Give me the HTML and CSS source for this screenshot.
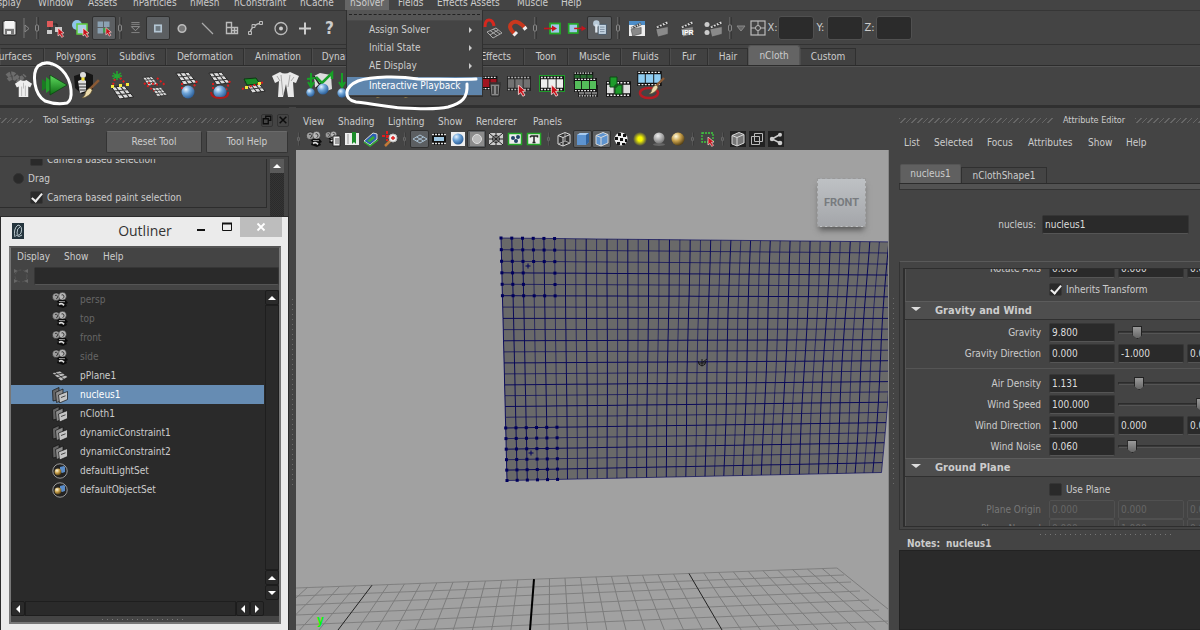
FILE: index.html
```html
<!DOCTYPE html>
<html lang="en">
<head>
<meta charset="utf-8">
<title>nCloth scene</title>
<link rel="stylesheet" href="styles.css">
</head>
<body>
<svg class="defs" aria-hidden="true">
  <defs>
    <linearGradient id="gGreen" x1="0" y1="0" x2="0" y2="1"><stop offset="0" stop-color="#5fdc5f"/><stop offset="1" stop-color="#0c6b12"/></linearGradient>
    <radialGradient id="gBlue" cx=".35" cy=".3" r=".8"><stop offset="0" stop-color="#e8f4ff"/><stop offset=".4" stop-color="#6fa5d8"/><stop offset="1" stop-color="#1d4f8b"/></radialGradient>
    <radialGradient id="gGold" cx=".35" cy=".3" r=".8"><stop offset="0" stop-color="#fffbe0"/><stop offset=".45" stop-color="#c8a04a"/><stop offset="1" stop-color="#3b2a08"/></radialGradient>
    <radialGradient id="gGrey" cx=".4" cy=".3" r=".8"><stop offset="0" stop-color="#eee"/><stop offset="1" stop-color="#666"/></radialGradient>
    <radialGradient id="gYellow"><stop offset=".3" stop-color="#f8f800"/><stop offset="1" stop-color="#f8f800" stop-opacity="0"/></radialGradient>
    <symbol id="cursor" viewBox="0 0 8 10"><path d="M1 0l6 5-2.500.4 2 3-1.800 1-1.700-3L1 8z" fill="#c8141c" stroke="#f4dada" stroke-width=".7"/></symbol>
    <symbol id="sep" viewBox="0 0 6 24"><path d="M3 1v22" stroke="#777"/><path d="M3 1v22" stroke="#2a2a2a" transform="translate(1 0)"/><rect x="1.500" y="9" width="3" height="6" rx="1" fill="#444" stroke="#888"/></symbol>
    <symbol id="clap" viewBox="0 0 18 18"><path d="M2 7l12-6 1 3L3.500 9z" fill="#ddd" stroke="#222" stroke-width=".6"/><path d="M5 6l1.500 1.500M8 4.500l1.500 1.500M11 3l1.500 1.500" stroke="#222" stroke-width="1.500"/><path d="M2 9.500l13-2.500v8L4 18z" fill="#8a8a8a" stroke="#333" stroke-width=".6"/></symbol>
    <symbol id="plane" viewBox="0 0 24 14"><path d="M1 2l13-1 9 11-14 2z" fill="#dedede" stroke="#222"/><path d="M5 1.600l9 11.800M10 1.300l9 11.500M3.600 6l13-1.300M6 10l14-1.600" stroke="#333" stroke-width="1.100" fill="none"/></symbol>
    <symbol id="ball" viewBox="0 0 14 14"><circle cx="7" cy="7" r="6.500" fill="url(#gBlue)"/></symbol>
    <symbol id="film" viewBox="0 0 26 16"><rect width="26" height="16" fill="#111"/><path d="M1 1.500h24M1 14.500h24" stroke="#eee" stroke-width="1.500" stroke-dasharray="2 1.500"/><path d="M1 3.500h7v9H1zM9 3.500h8v9H9zM18 3.500h7v9h-7z" fill="currentColor"/></symbol>
    <symbol id="brush" viewBox="0 0 18 18"><path d="M17 1L8 10" stroke="#8a5a35" stroke-width="2.400"/><path d="M9 8l2 2q-2 6-9 7 3-2 3-5 1-3 4-4z" fill="#ecdcae" stroke="#6b5a30" stroke-width=".6"/></symbol>
    <symbol id="cam" viewBox="0 0 16 16"><path d="M4 8l9-1 3 4-2 1 1 2-4 2-6-2 1-3z" fill="#0c0c0c"/><circle cx="4.200" cy="4.800" r="3.900" fill="#9c9c9c" stroke="#111" stroke-width=".5"/><circle cx="10.500" cy="4.200" r="3.900" fill="#b8b8b8" stroke="#111" stroke-width=".5"/><path d="M3 3.500q2-1 2.500 1T4 7M9.500 3q2-1 2.500 1t-1.500 2.500" stroke="#3a3a3a" fill="none"/><path d="M7 12.500q2.500-2 5 .8" stroke="#ddd" stroke-width="1.800" fill="none"/><path d="M7 9.500l6 .2" stroke="#999"/></symbol>
    <symbol id="mesh" viewBox="0 0 16 16"><path d="M0 5l8-2 8 6-7 4z" fill="#bbb" stroke="#111" stroke-width=".6"/><path d="M3 4.300l9 6.900M2 7l9-2M5 10l9-3" stroke="#222" stroke-width=".8"/></symbol>
    <symbol id="stack" viewBox="0 0 16 16"><path d="M.5 3.500L7 .500v12L1 14z" fill="#666" stroke="#111" stroke-width=".7"/><path d="M3.500 5.500L11 2v11l-6.500 2.500z" fill="#8d8d8d" stroke="#111" stroke-width=".7"/><path d="M6.500 8l9-3.500v8L7.500 16z" fill="#c6c6c6" stroke="#111" stroke-width=".7"/><path d="M9 10.500l4.500-1.700" stroke="#444"/></symbol>
    <symbol id="set" viewBox="0 0 16 16"><circle cx="8" cy="8" r="7.200" fill="#222" stroke="#999"/><path d="M8 4l4-1 1 1v5l-3 1-2-1z" fill="#5a8cc8"/><circle cx="6" cy="9" r="3.400" fill="url(#gGold)"/></symbol>
    <symbol id="cube" viewBox="0 0 16 16"><path d="M2 4.500L9 1.500l5 2v8.500L7 15l-5-2z" fill="currentColor"/><path d="M2 4.500L9 1.500l5 2v8.500L7 15l-5-2zM2 4.500l5 2 7-3M7 6.500V15" fill="none" stroke="#d8d8d8"/></symbol>
    <symbol id="shirt" viewBox="0 0 20 20"><path d="M1 5l6-4q3 2 6 0l6 4-2 4-2-1v11H5V8L3 9z" fill="#eee"/><path d="M8 8v10M12 7v11M10 4v6" stroke="#bbb"/></symbol>
  </defs>
</svg>

<nav class="menubar" aria-label="Main menu">
  <button>Display</button><button>Window</button><button>Assets</button><button>nParticles</button><button>nMesh</button><button>nConstraint</button><button>nCache</button><button class="open">nSolver</button><button>Fields</button><button>Effects Assets</button><button>Muscle</button><button>Help</button>
</nav>

<div class="toolbar" role="toolbar" aria-label="Status line">
  <button aria-label="Save"><svg viewBox="0 0 18 24"><rect x="3" y="5" width="13" height="14" rx="1" fill="#ddd" stroke="#222"/><rect x="5" y="5" width="9" height="7" fill="#f4f4f4"/><path d="M5 13h9v6H5z" fill="#777"/><path d="M7 15h4v3H7z" fill="#eee"/></svg></button>
  <span class="cell"><svg viewBox="0 0 14 24"><path d="M6 2v20" stroke="#777"/><path d="M7 9l4 3.500L7 16z" fill="none" stroke="#888"/></svg></span>
  <span class="cell"><svg viewBox="0 0 6 24"><use href="#sep"/></svg></span>
  <button aria-label="Select by hierarchy"><svg viewBox="0 0 24 24"><rect x="4" y="5" width="6" height="6" fill="#e05a5a"/><rect x="4" y="14" width="5" height="4" fill="#ccc"/><path d="M7 11v3M10 8h4v4" stroke="#222" fill="none"/><rect x="12" y="11" width="7" height="5" fill="#ccc"/><use href="#cursor" x="14" y="12" width="8" height="10"/></svg></button>
  <button aria-label="Select by object"><svg viewBox="0 0 24 24"><circle cx="9" cy="9" r="5" fill="#8fc4ec"/><rect x="9" y="8" width="10" height="10" fill="#a9cfe6" stroke="#5fcb3e" stroke-width="1.500"/><use href="#cursor" x="14" y="12" width="8" height="10"/></svg></button>
  <button class="on" aria-label="Select by component"><svg viewBox="0 0 24 24"><path d="M5 5h6v6H5zM12 5h6v6h-6zM5 12h6v6H5z" fill="#8ba2b3"/><path d="M11 12h6v5h-6z" fill="#3e9f4e"/><use href="#cursor" x="13" y="11" width="8" height="11"/></svg></button>
  <span class="cell"><svg viewBox="0 0 6 24"><use href="#sep"/></svg></span>
  <button aria-label="Mask menu"><svg viewBox="0 0 24 24"><path d="M8 6h9M8 8h9M8 17h9" stroke="#888"/><path d="M8 10.500h9L12.500 15z" fill="none" stroke="#999"/></svg></button>
  <button class="on" aria-label="Points"><svg viewBox="0 0 24 24"><rect x="8.500" y="9" width="7" height="7" fill="#6d7880" stroke="#b4c6d4" stroke-width="1.800"/></svg></button>
  <button aria-label="Handles"><svg viewBox="0 0 24 24"><circle cx="12" cy="12.500" r="3.800" fill="#777" stroke="#bbb" stroke-width="1.600"/></svg></button>
  <button aria-label="Lines"><svg viewBox="0 0 24 24"><path d="M7 7l11 11" stroke="#aaa" stroke-width="1.300"/></svg></button>
  <button aria-label="Faces"><svg viewBox="0 0 24 24"><path d="M6.500 6.500h5v5h6v6h-11zM6.500 11.500h5v6M12 14.500h5M14.500 12v6" fill="none" stroke="#bbb" stroke-width="1.400"/></svg></button>
  <button aria-label="Curves"><svg viewBox="0 0 24 24"><path d="M6 17Q8 8 18 7" fill="none" stroke="#bbb" stroke-width="1.500"/><path d="M4.500 15.500h3v3h-3zM8 8.500h3v3H8zM15.500 5.500h3v3h-3z" fill="#555" stroke="#bbb"/></svg></button>
  <button aria-label="Pivot"><svg viewBox="0 0 24 24"><circle cx="12" cy="12.500" r="6" fill="none" stroke="#bbb" stroke-width="1.300"/><circle cx="12" cy="12.500" r="2" fill="#ccc"/></svg></button>
  <button aria-label="Add"><svg viewBox="0 0 24 24"><path d="M12 6.500v12M6 12.500h12" stroke="#ccc" stroke-width="2"/></svg></button>
  <button aria-label="Help mask"><span class="question">?</span></button>
  <span></span>
  <button aria-label="Snap to grid"><svg viewBox="0 0 24 24"><path d="M6 16l9-4 6 5-9 5zM9 14.500l7 5M12 13l7 5M9 19l8-5" stroke="#aaa" fill="none"/><path d="M4 11Q4 4 8 4t5 6" fill="none" stroke="#d6281e" stroke-width="3"/></svg></button>
  <button aria-label="Snap to curve"><svg viewBox="0 0 24 24"><path d="M9 18Q1 11 6 7t13 5" fill="none" stroke="#c9381e" stroke-width="4"/><path d="M7.500 19.500l3.500-3.500M17.500 13.500l3-2.500" stroke="#eee" stroke-width="3"/></svg></button>
  <span class="cell"><svg viewBox="0 0 6 24"><use href="#sep"/></svg></span>
  <button aria-label="Inputs"><svg viewBox="0 0 24 24"><rect x="9" y="7.500" width="10" height="10" fill="#9ec9e8" stroke="#24a827" stroke-width="1.800"/><path d="M3 12.500h9" stroke="#c8141c" stroke-width="1.600"/><path d="M11 9.500l5 3-5 3z" fill="#c8141c"/></svg></button>
  <button aria-label="Outputs"><svg viewBox="0 0 24 24"><rect x="4" y="7.500" width="10" height="10" fill="#9ec9e8" stroke="#24a827" stroke-width="1.800"/><path d="M10 12.500h8" stroke="#c8141c" stroke-width="1.600"/><path d="M18 9.500l5 3-5 3z" fill="#c8141c"/></svg></button>
  <button class="on" aria-label="History"><svg viewBox="0 0 24 24"><path d="M10 8h9v11h-9z" fill="#c6d6e4" stroke="#456"/><path d="M12 11h5M12 13.500h5M12 16h5" stroke="#789"/><circle cx="8" cy="7" r="3.500" fill="#b9cbd9"/><path d="M8 8v9" stroke="#dde6ee" stroke-width="2.500"/></svg></button>
  <span class="cell"><svg viewBox="0 0 6 24"><use href="#sep"/></svg></span>
  <button aria-label="Render view"><svg viewBox="0 0 24 24"><rect x="4" y="5" width="16" height="15" fill="#eee"/><path d="M4 5h16v4H4z" fill="#4d8dc8"/><use href="#clap" x="4" y="6" width="15" height="14"/></svg></button>
  <button aria-label="Render"><svg viewBox="0 0 24 24"><use href="#clap" x="3" y="4" width="17" height="17"/></svg></button>
  <button aria-label="IPR render"><svg viewBox="0 0 24 24"><use href="#clap" x="3" y="4" width="17" height="17"/><text class="ipr" x="6" y="19">IPR</text></svg></button>
  <button aria-label="Render settings"><svg viewBox="0 0 24 24"><circle cx="5" cy="8.500" r="2.500" fill="#ccc"/><circle cx="5" cy="16.500" r="2.500" fill="#ccc"/><use href="#clap" x="6" y="4" width="17" height="17"/></svg></button>
  <span class="cell"><svg viewBox="0 0 6 24"><use href="#sep"/></svg></span>
  <span class="cell"><svg viewBox="0 0 14 24"><path d="M3 10h8l-4 5z" fill="#666" stroke="#888"/></svg></span>
  <button aria-label="Input operations"><svg viewBox="0 0 18 24"><rect x="2" y="5" width="14" height="14" fill="none" stroke="#bbb" stroke-width="1.200"/><path d="M9 5v14M2 12h14" stroke="#bbb"/><circle cx="9" cy="12" r="2.500" fill="#444" stroke="#bbb"/></svg></button>
  <label for="cx">X:</label><input id="cx">
  <label for="cy">Y:</label><input id="cy">
  <label for="cz">Z:</label><input id="cz">
</div>

<div class="tabs" role="tablist">
  <button role="tab" class="clipped">Surfaces</button><button role="tab">Polygons</button><button role="tab">Subdivs</button><button role="tab">Deformation</button><button role="tab">Animation</button><button role="tab">Dynamics</button><button role="tab" class="end">Paint Effects</button><button role="tab">Toon</button><button role="tab">Muscle</button><button role="tab">Fluids</button><button role="tab">Fur</button><button role="tab">Hair</button><button role="tab" class="active">nCloth</button><button role="tab">Custom</button>
</div>

<div class="shelf" role="toolbar" aria-label="Shelf">
  <button aria-label="Create nCloth"><svg viewBox="0 0 32 32"><path d="M2 6q5-5 9 0t9-1M3 10q5-4 9 0t7 0" fill="none" stroke="#6c6c6c" stroke-width="4" stroke-dasharray="4 1"/><use href="#shirt" x="9" y="9" width="19" height="19"/></svg></button>
  <button aria-label="Interactive playback"><svg viewBox="0 0 32 32"><path d="M4 9l9 6-9 6z" fill="#1b7a22"/><path d="M8 7l11 8-11 8z" fill="#249d2c"/><path d="M12 5l17 10-17 10z" fill="url(#gGreen)" stroke="#0a4a10" stroke-width=".8"/></svg></button>
  <button aria-label="Paint cloth"><svg viewBox="0 0 32 32"><path d="M3 6l12-4 7 3v14l-11 5L4 18z" fill="#151515"/><circle cx="12" cy="5" r="3" fill="#ddd"/><path d="M7 11q5-3 8 0v10l-6 2z" fill="#ddd"/><path d="M7 14h8M8 17h7M9 20h6" stroke="#333"/><circle cx="12" cy="9" r="1.800" fill="#f2e13a"/><use href="#brush" x="9" y="9" width="20" height="20"/></svg></button>
  <button aria-label="Transform constraint"><svg viewBox="0 0 32 32"><use href="#plane" x="6" y="15" width="25" height="14"/><path d="M13 1v9M9 3l8 6M17 3l-8 6M8 6h10" stroke="#25a532" stroke-width="1.500"/><path d="M11 9L8 17M16 8l8 8" stroke="#e01c1c" stroke-width="2" stroke-dasharray="2 2"/><path d="M7 15h3v3H7zM15 14h3v3h-3zM22 13h3v3h-3z" fill="#f4e93c"/></svg></button>
  <button aria-label="Component constraint"><svg viewBox="0 0 32 32"><use href="#plane" x="5" y="6" width="17" height="10"/><use href="#plane" x="14" y="16" width="17" height="11"/><path d="M7 13l10 8M20 8l9 8M11 13l12 2" stroke="#e01c1c" stroke-width="2" stroke-dasharray="2 2"/></svg></button>
  <button aria-label="Point to surface"><svg viewBox="0 0 32 32"><use href="#plane" x="5" y="1" width="23" height="14"/><path d="M12 13v7M27 11l-5 9" stroke="#e01c1c" stroke-width="2" stroke-dasharray="2 2"/><use href="#ball" x="11" y="15" width="14" height="14"/></svg></button>
  <button aria-label="Slide on surface"><svg viewBox="0 0 32 32"><use href="#plane" x="5" y="1" width="23" height="14"/><path d="M10 13v8M27 11l-4 9" stroke="#e01c1c" stroke-width="2" stroke-dasharray="2 2"/><use href="#ball" x="10" y="15" width="14" height="14"/><path d="M8 22q0 6 9 6t8-6" fill="none" stroke="#b21a1a" stroke-width="2"/></svg></button>
  <button aria-label="Weld border"><svg viewBox="0 0 32 32"><use href="#plane" x="8" y="10" width="22" height="13"/><path d="M8 9l12-1 4 6-13 1z" fill="#1c8c28" stroke="#0b3a10"/><path d="M6 19l22-7" stroke="#e01c1c" stroke-width="2" stroke-dasharray="2 2"/><path d="M9 16h3v3H9zM22 12h3v3h-3z" fill="#f4e93c"/></svg></button>
  <button aria-label="Cloth shirt"><svg viewBox="0 0 32 32"><path d="M3 6l8-4q5 3 10 0l9 4-3 7-3-1 1 15h-6l-2-13-3 13H9l1-16-4 2z" fill="#e9e9e9"/><path d="M12 5l2 20M21 5l-2 12M8 6l3 5M25 7l-3 4" stroke="#a9a9a9"/></svg></button>
  <button aria-label="Convert input"><svg viewBox="0 0 32 32"><path d="M12 6l6-3 11 2 1 14-8 3-9-5z" fill="#ddd"/><path d="M14 18L28 5M12 6l8 12" stroke="#222" stroke-width="1.500"/><path d="M14 7l6 6L30 3v6" fill="none" stroke="#17a026" stroke-width="2.500"/><path d="M9 3v13M6 12l3 5 3-5M5 9l8-1" fill="none" stroke="#17a026" stroke-width="2"/><use href="#ball" x="4" y="18" width="9" height="9"/><use href="#ball" x="15" y="13" width="12" height="12"/></svg></button>
  <button aria-label="Convert output"><svg viewBox="0 0 32 32"><path d="M7 3v13M4 12l3 5 3-5" fill="none" stroke="#17a026" stroke-width="2"/><use href="#ball" x="2" y="18" width="10" height="10"/></svg></button>
  <button aria-label="Paint properties"><svg viewBox="0 0 32 32"><use href="#brush" x="6" y="9" width="20" height="20"/></svg></button>
  <button aria-label="Paint texture"><svg viewBox="0 0 32 32"><use href="#brush" x="1" y="9" width="20" height="20"/></svg></button>
  <span></span>
  <button aria-label="Delete cache"><svg viewBox="0 0 32 32" color="#a01420"><use href="#film" x="4" y="6" width="24" height="14"/><path d="M20 14h10l-1 12h-8z" fill="#888" stroke="#222"/><path d="M19 13h12M23 16v8M27 16v8" stroke="#333" stroke-width="1.500"/></svg></button>
  <button aria-label="Attach cache"><svg viewBox="0 0 32 32" color="#8c8c8c"><g opacity=".65"><use href="#film" x="4" y="6" width="24" height="15"/></g><use href="#cursor" x="14" y="15" width="10" height="12"/></svg></button>
  <button aria-label="Select cache"><svg viewBox="0 0 32 32" color="#eee"><rect x="3" y="5" width="26" height="17" fill="#1f9b2a"/><use href="#film" x="4" y="6" width="24" height="15"/><use href="#cursor" x="14" y="15" width="10" height="12"/></svg></button>
  <button aria-label="Merge cache"><svg viewBox="0 0 32 32"><g color="#27682e"><use href="#film" x="3" y="2" width="23" height="12"/></g><g color="#777"><use href="#film" x="8" y="15" width="22" height="12"/></g><g color="#54bd5a"><use href="#film" x="4" y="8" width="25" height="14"/></g></svg></button>
  <button aria-label="Append cache"><svg viewBox="0 0 32 32" color="#ddd"><use href="#film" x="4" y="11" width="25" height="16"/><path d="M8 7h7v10H8zM13 15h7v9h-7z" fill="#1e9c2b" stroke="#0d4814"/></svg></button>
  <button aria-label="Paint cache"><svg viewBox="0 0 32 32" color="#8fcdf2"><use href="#film" x="2" y="1" width="25" height="15"/><ellipse cx="14" cy="23" rx="9" ry="5" fill="none" stroke="#b51c24" stroke-width="2.500"/><use href="#brush" x="11" y="7" width="20" height="18"/></svg></button>
</div>

<main class="work">
  <section class="tools" aria-label="Tool Settings">
    <header class="dock"><i class="grip short"></i><h2>Tool Settings</h2><i class="grip"></i>
      <button class="dockbtn" aria-label="Float"><svg viewBox="0 0 12 12"><path d="M4.500 4V1.500h6v5H8M1.500 4.500h6v6h-6z" fill="none" stroke="#0c0c0c" stroke-width="1.600"/></svg></button><button class="dockbtn" aria-label="Close"><svg viewBox="0 0 12 12"><path d="M2 2l8 8M10 2l-8 8" stroke="#0c0c0c" stroke-width="1.800"/></svg></button></header>
    <div class="toolbtns"><button>Reset Tool</button><button>Tool Help</button></div>
    <div class="toolscroll">
      <div class="toolopts">
        <label class="indent"><input type="checkbox">Camera based selection</label>
        <label class="radio"><input type="radio" name="mode">Drag</label>
        <label class="indent"><input type="checkbox" checked>Camera based paint selection</label>
      </div>
      <div class="bar"><button aria-label="Scroll up"><i class="up"></i></button></div>
    </div>
  </section>
  <i class="vgrip left"></i>

  <section class="view" aria-label="Viewport">
    <nav class="viewmenu"><button>View</button><button>Shading</button><button>Lighting</button><button>Show</button><button>Renderer</button><button>Panels</button></nav>
    <div class="viewtools" role="toolbar" aria-label="Panel toolbar">
      <svg class="s" viewBox="0 0 6 24"><use href="#sep"/></svg>
      <button aria-label="Select camera"><svg viewBox="0 0 16 16"><use href="#cam" width="16" height="16"/></svg></button>
      <button aria-label="Camera attributes"><svg viewBox="0 0 16 16"><use href="#cam" width="13" height="13"/><path d="M8 5h7v10H8z" fill="#eee" stroke="#222"/><path d="M10 8h4M10 10h4M10 12h4" stroke="#555"/></svg></button>
      <button aria-label="Bookmarks"><svg viewBox="0 0 16 16"><path d="M1 2h14v12H1z" fill="#eee"/><path d="M4 3v10" stroke="#999"/><path d="M8 1h4v12l-2-2-2 2z" fill="#1d8d2a"/></svg></button>
      <button aria-label="Image plane"><svg viewBox="0 0 16 16"><path d="M1 10l9-8 4 1v5l-7 6z" fill="#2d5fb3" stroke="#ddd"/><path d="M4 10l6-5 2 2-5 4z" fill="#35ad35"/><path d="M1 11l6 4 8-6" stroke="#35ad35" stroke-width="1.500" fill="none"/></svg></button>
      <button aria-label="Pan and zoom"><svg viewBox="0 0 16 16"><path d="M5 0v10M0 5h10" stroke="#e01c1c" stroke-width="2" stroke-dasharray="3 1"/><path d="M8 10l-5 5" stroke="#c07a3a" stroke-width="2.500"/><circle cx="11" cy="7" r="4" fill="#eee" stroke="#bbb"/><path d="M11 5v4M9 7h4" stroke="#e01c1c" stroke-width="1.400"/></svg></button>
      <svg class="s" viewBox="0 0 6 24"><use href="#sep"/></svg>
      <button class="on" aria-label="Grid"><svg viewBox="0 0 16 16"><path d="M1 8l7-4 7 4-7 4zM4.500 6l7 4M11.500 6l-7 4" fill="none" stroke="#a9c0d2"/></svg></button>
      <button aria-label="Film gate"><svg viewBox="0 0 16 16"><rect x="1" y="2" width="14" height="12" fill="#111"/><path d="M1 3.500h14M1 12.500h14" stroke="#ddd" stroke-width="1.500" stroke-dasharray="2 1"/><path d="M3 6h10v4H3z" fill="#9fc8e4"/></svg></button>
      <button aria-label="Resolution gate"><svg viewBox="0 0 16 16"><rect x="1" y="1" width="14" height="14" fill="#eee"/><circle cx="8" cy="8" r="5.500" fill="url(#gBlue)"/></svg></button>
      <button class="on" aria-label="Gate mask"><svg viewBox="0 0 16 16"><rect x="1" y="1" width="14" height="14" fill="#8b8b8b"/><circle cx="8" cy="8" r="4.500" fill="#bbb" stroke="#ddd"/></svg></button>
      <button aria-label="Field chart"><svg viewBox="0 0 16 16"><rect x="1" y="2" width="14" height="12" fill="#ccc"/><path d="M1 2l14 12M15 2L1 14M8 2v12M1 8h14" stroke="#222"/><circle cx="8" cy="8" r="3.500" fill="none" stroke="#222"/></svg></button>
      <button aria-label="Safe action"><svg viewBox="0 0 16 16"><rect x="1.500" y="2.500" width="13" height="11" fill="#eee" stroke="#24a827" stroke-width="1.500"/><circle cx="6" cy="7" r="2" fill="#246"/><circle cx="11" cy="6" r="2" fill="#246"/><circle cx="9" cy="10" r="2" fill="#246"/></svg></button>
      <button aria-label="Safe title"><svg viewBox="0 0 16 16"><rect x="1.500" y="2.500" width="13" height="11" fill="#eee" stroke="#24a827" stroke-width="1.500"/><path d="M4.500 5h7v1.500M8 5v6.500M6.500 11.500h3M4.500 6.500V5" fill="none" stroke="#222" stroke-width="1.500"/></svg></button>
      <svg class="s" viewBox="0 0 6 24"><use href="#sep"/></svg>
      <button aria-label="Wireframe"><svg viewBox="0 0 16 16" color="#333"><use href="#cube" width="16" height="16"/><path d="M9 2v8l5 2M9 10l-7 3" fill="none" stroke="#aaa"/></svg></button>
      <button class="on" aria-label="Smooth shade"><svg viewBox="0 0 16 16"><path d="M2 4l3-2h9v9l-3 3H2z" fill="#5e94d0"/><path d="M2 4l3-2h9l-3 2z" fill="#a8cbf0"/><path d="M11 4l3-2v9l-3 3z" fill="#2f629e"/></svg></button>
      <button class="on" aria-label="Wireframe on shaded"><svg viewBox="0 0 16 16" color="#5e94d0"><use href="#cube" width="16" height="16"/></svg></button>
      <button aria-label="Textured"><svg viewBox="0 0 16 16"><circle cx="8" cy="8" r="6.500" fill="#eee"/><path d="M5 2h3v3H5zM10 3h3v3h-3zM2 6h3v3H2zM7 7h3v3H7zM4 11h3v3H4zM12 8h2v3h-2zM9 12h3v2H9z" fill="#111"/></svg></button>
      <button aria-label="Lights"><svg viewBox="0 0 16 16"><circle cx="8" cy="8" r="7" fill="url(#gYellow)"/></svg></button>
      <button aria-label="Shadows"><svg viewBox="0 0 16 16"><ellipse cx="8" cy="13.500" rx="6" ry="1.500" fill="#666"/><circle cx="8" cy="7" r="5.500" fill="url(#gGrey)"/></svg></button>
      <button aria-label="High quality"><svg viewBox="0 0 16 16"><circle cx="8" cy="8" r="6.500" fill="url(#gGold)"/></svg></button>
      <svg class="s" viewBox="0 0 6 24"><use href="#sep"/></svg>
      <button aria-label="Isolate select"><svg viewBox="0 0 16 16"><rect x="2" y="2" width="11" height="9" fill="none" stroke="#3ecb3e" stroke-width="1.300" stroke-dasharray="2 1"/><use href="#cursor" x="7" y="6" width="8" height="10"/></svg></button>
      <svg class="s" viewBox="0 0 6 24"><use href="#sep"/></svg>
      <button class="dark" aria-label="X-ray"><svg viewBox="0 0 16 16" color="#777"><use href="#cube" width="16" height="16"/></svg></button>
      <button class="dark" aria-label="X-ray joints"><svg viewBox="0 0 16 16"><path d="M2.500 5.500h8v8h-8zM5.500 2.500h8v8h-8z" fill="none" stroke="#bbb"/></svg></button>
      <button class="dark" aria-label="Share"><svg viewBox="0 0 16 16"><path d="M12 3.500L4 8l8 4" fill="none" stroke="#ccc" stroke-width="1.500"/><circle cx="4" cy="8" r="2.200" fill="#ccc"/><circle cx="12" cy="3.800" r="2" fill="#ccc"/><circle cx="12" cy="12" r="2.300" fill="#ccc"/></svg></button>
    </div>
    <div class="stage">
      <svg class="scene" width="1000" height="480"><g id="ground"></g><g id="cloth"></g></svg>
      <div class="viewcube">FRONT</div>
      <span class="axis">y</span>
    </div>
  </section>

  <section class="attrs" aria-label="Attribute Editor">
    <i class="vgrip right"></i>
    <div class="attrbody">
      <header class="dock"><i class="grip"></i><h2>Attribute Editor</h2><i class="grip"></i></header>
      <nav class="attrmenu"><button>List</button><button>Selected</button><button>Focus</button><button>Attributes</button><button>Show</button><button>Help</button></nav>
      <div class="attrtabs" role="tablist"><button role="tab" class="active">nucleus1</button><button role="tab">nClothShape1</button></div>
      <div class="name"><label for="nodename">nucleus:</label><input id="nodename" value="nucleus1"></div>
      <div class="frame"><div class="inner">
        <div class="rows first">
          <div class="row"><label for="ra">Rotate Axis</label><input id="ra" value="0.000"><input value="0.000" aria-label="Rotate Axis Y"><input value="0.000" aria-label="Rotate Axis Z"></div>
          <div class="row"><span></span><label class="check"><input type="checkbox" checked>Inherits Transform</label></div>
        </div>
        <h3><i class="down"></i>Gravity and Wind</h3>
        <div class="rows">
          <div class="row"><label for="g">Gravity</label><input id="g" value="9.800"><input type="range" value="8" aria-label="Gravity"></div>
          <div class="row"><label for="gd">Gravity Direction</label><input id="gd" value="0.000"><input value="-1.000" aria-label="Gravity Direction Y"><input value="0.000" aria-label="Gravity Direction Z"></div>
          <hr>
          <div class="row"><label for="ad">Air Density</label><input id="ad" value="1.131"><input type="range" value="9" aria-label="Air Density"></div>
          <div class="row"><label for="ws">Wind Speed</label><input id="ws" value="100.000"><input type="range" value="46" aria-label="Wind Speed"></div>
          <div class="row"><label for="wd">Wind Direction</label><input id="wd" value="1.000"><input value="0.000" aria-label="Wind Direction Y"><input value="0.000" aria-label="Wind Direction Z"></div>
          <div class="row"><label for="wn">Wind Noise</label><input id="wn" value="0.060"><input type="range" value="5" aria-label="Wind Noise"></div>
        </div>
        <h3><i class="down"></i>Ground Plane</h3>
        <div class="rows">
          <div class="row"><span></span><label class="check"><input type="checkbox">Use Plane</label></div>
          <div class="row off"><label for="po">Plane Origin</label><input id="po" value="0.000" disabled><input value="0.000" aria-label="Plane Origin Y" disabled><input value="0.000" aria-label="Plane Origin Z" disabled></div>
          <div class="row off"><label for="pn">Plane Normal</label><input id="pn" value="0.000" disabled><input value="1.000" aria-label="Plane Normal Y" disabled><input value="0.000" aria-label="Plane Normal Z" disabled></div>
        </div>
      </div></div>
      <i class="hgrip"></i>
      <label class="noteslabel" for="notes"><span>Notes:</span> <span>nucleus1</span></label>
      <textarea id="notes"></textarea>
    </div>
  </section>
</main>

<div class="popup" role="menu">
  <div class="tear"></div>
  <button role="menuitem">Assign Solver<i></i></button>
  <button role="menuitem">Initial State<i></i></button>
  <button role="menuitem">AE Display<i></i></button>
  <button role="menuitem" class="hot">Interactive Playback</button>
</div>

<section class="window" aria-label="Outliner">
  <header class="titlebar">
    <svg class="appicon" viewBox="0 0 12 16"><rect width="12" height="16" fill="#24343d"/><path d="M3 14Q1 6 6 2q5 1 3 8-3 4-4 0 0-5 3-6M4 12q3 3 6 0" fill="none" stroke="#b9c7cd"/></svg>
    <h1>Outliner</h1>
    <button aria-label="Minimize"><svg viewBox="0 0 12 12"><path d="M2 9h8" stroke="#111" stroke-width="2"/></svg></button>
    <button aria-label="Maximize"><svg viewBox="0 0 12 12"><path d="M1.500 2.500h9v7h-9z" fill="none" stroke="#111"/><path d="M1 2.500h10" stroke="#111" stroke-width="2"/></svg></button>
    <button class="close" aria-label="Close"><svg viewBox="0 0 12 12"><path d="M2.500 2.500l7 7M9.500 2.500l-7 7" stroke="#fff" stroke-width="1.800"/></svg></button>
  </header>
  <div class="client">
    <nav><button>Display</button><button>Show</button><button>Help</button></nav>
    <div class="filter"><svg viewBox="0 0 16 16"><path d="M1 1l4 2-4 2zM15 1l-4 2 4 2zM1 11l4 2-4 2zM15 11l-4 2 4 2z" fill="#666"/><circle cx="8" cy="8" r="6" fill="none" stroke="#555" stroke-dasharray="3 2"/></svg><input aria-label="Filter"></div>
    <div class="listarea">
      <ul>
        <li class="dim"><svg><use href="#cam"/></svg>persp</li>
        <li class="dim"><svg><use href="#cam"/></svg>top</li>
        <li class="dim"><svg><use href="#cam"/></svg>front</li>
        <li class="dim"><svg><use href="#cam"/></svg>side</li>
        <li><svg><use href="#mesh"/></svg>pPlane1</li>
        <li class="sel"><svg><use href="#stack"/></svg>nucleus1</li>
        <li><svg><use href="#stack"/></svg>nCloth1</li>
        <li><svg><use href="#stack"/></svg>dynamicConstraint1</li>
        <li><svg><use href="#stack"/></svg>dynamicConstraint2</li>
        <li><svg><use href="#set"/></svg>defaultLightSet</li>
        <li><svg><use href="#set"/></svg>defaultObjectSet</li>
      </ul>
      <div class="vbar"><button aria-label="Up"><i class="up"></i></button><div class="thumb"></div><button aria-label="Page up"><i class="up"></i></button><button aria-label="Page down"><i class="dn"></i></button></div>
      <div class="hbar"><button aria-label="Left"><i class="lf"></i></button><div class="thumb"></div><button aria-label="Page left"><i class="lf"></i></button><button aria-label="Page right"><i class="rt"></i></button></div>
    </div>
    <i class="hgrip"></i>
  </div>
</section>

<svg class="ink" width="500" height="120" aria-hidden="true">
  <path d="M52 64Q45 61 38 66Q33 72 35 84Q37 96 45 101Q56 105 67 103Q72 100 71 90Q70 78 62 70Q56 64 48 63"/>
  <path d="M476 79C455 80 440 79 418 79C400 76 372 76 358 81C344 87 343 99 356 102C375 104 388 107 402 108C420 109 440 109 448 107C462 103 468 98 467 84"/>
</svg>
<script src="scene.js"></script>
</body>
</html>
```
FILE: styles.css
```css
* { box-sizing: border-box; }
body {
  margin: 0; height: 100vh; overflow: hidden; display: flex; flex-direction: column; position: relative;
  background: #444; color: #ccc; font: 10px/14px "DejaVu Sans Condensed", "DejaVu Sans", "Noto Sans", sans-serif;
}
button { font: inherit; color: inherit; background: none; border: 0; padding: 0; margin: 0; white-space: nowrap; }
input, textarea { font: inherit; color: #ddd; background: #2a2a2a; border: 1px solid #363636; border-bottom-color: #555; border-radius: 2px; padding: 0 2px; margin: 0; min-width: 0; }
h1, h2, h3 { margin: 0; font-size: 10px; font-weight: normal; }
svg { display: block; }
.defs { position: absolute; width: 0; height: 0; }

.menubar { display: grid; justify-items: start; grid-template-columns: 50px 50px 45px 57px 44px 66px 45px 53px 39px 80px 44px 36px; height: 20px; margin: -10px 0 0 -12px; flex: none; }
.menubar button { padding-top: 5px; }
.menubar .open { width: 44px; background: #666; }

.toolbar { flex: none; height: 35px; align-items: center; border-top: 1px solid #363636; border-bottom: 1px solid #333; display: grid; grid-template-rows: 24px; align-content: center;
  grid-template-columns: 18px 14px 10px 25px 25px 24px 8px 22px 24px 24px 25px 25px 24px 25px 24px 25px 139px 24px 25px 10px 25px 22px 25px 11px 28px 24px 26px 26px 6px 16px 18px 11px 36px 13px 36px 13px 36px; }
.toolbar button, .cell { height: 24px; display: grid; place-items: center; }
.toolbar svg { height: 24px; max-width: 100%; }
.toolbar .on, .viewtools .on { background: #5c5f62; border: 1px solid #303030; border-radius: 2px; }
.toolbar .on svg { height: 22px; }
.toolbar input { height: 24px; background: #2b2b2b; border: 1px solid #505050; border-radius: 3px; }
.toolbar label { font-size: 11px; text-align: center; }
.question { font: bold 17px "DejaVu Sans Condensed", "DejaVu Sans", sans-serif; }
.ipr { font: bold 7px "Liberation Sans", sans-serif; fill: #fff; }

.tabs { flex: none; height: 21px; align-items: end; display: grid; border-bottom: 1px solid #2c2c2c; grid-template-columns: 44px 64px 58px 78px 68px 64px 148px 44px 53px 49px 38px 40px 52px 56px; }
.tabs button { height: 17px; border: 1px solid #303030; border-left-color: #4c4c4c; border-bottom: 0; background: #414141; }
.tabs .clipped { direction: rtl; padding-right: 11px; }
.tabs .end { text-align: right; padding-right: 12px; }
.tabs .active { height: 20px; background: #646464; border-color: #555; border-radius: 3px 3px 0 0; }

.shelf { flex: none; height: 41px; display: grid; align-items: center; border-top: 1px solid #555; border-bottom: 2px solid #303030; padding-left: 5px; grid-template-columns: repeat(13, 33px) 36px repeat(6, 33px); }
.shelf svg { width: 32px; height: 32px; }

.work { flex: 1; display: flex; min-height: 0; }
.tools { width: 289px; display: flex; flex-direction: column; border-top: 1px solid #303030; }
.dock { display: flex; align-items: center; height: 20px; gap: 4px; margin-top: 2px; }
.dock h2 { font-size: 9px; margin: 0 6px; white-space: nowrap; }
.grip { flex: 1; height: 5px; background: repeating-linear-gradient(135deg, #666 0 1px, transparent 1px 4px); }
.grip.short { flex: 0 0 33px; }
.dockbtn { width: 12px; height: 13px; border: 1px solid #333; border-radius: 2px; }
.dockbtn svg { width: 10px; height: 10px; }
.toolbtns { display: flex; justify-content: flex-end; gap: 4px; padding-right: 1px; margin-top: 1px; }
.toolbtns button { width: 96px; height: 22px; background: #5d5d5d; border: 1px solid #343434; border-top-color: #6a6a6a; border-radius: 2px; }
.toolbtns button + button { width: 82px; }
.toolscroll { flex: 1; display: flex; gap: 3px; border: 1px solid #333; border-left: 0; margin-top: 3px; min-height: 0; overflow: hidden; }
.toolopts { flex: 1; height: 49px; margin-top: 2px; overflow: hidden; border-right: 1px solid #2d2d2d; border-bottom: 1px solid #2d2d2d; display: flex; flex-direction: column; justify-content: flex-end; }
.toolopts label { display: flex; align-items: center; gap: 4px; height: 19px; flex: none; padding-left: 13px; }
.toolopts .indent { padding-left: 30px; }
.bar { width: 14px; margin: 2px 4px 0 0; background: repeating-conic-gradient(#2b2b2b 0 25%, #343434 0 50%) 0 0/2px 2px; }
.bar button { width: 14px; height: 14px; background: #5a5a5a; display: grid; place-items: center; }
input[type=checkbox] { appearance: none; width: 13px; height: 13px; padding: 0; background: #2a2a2a; border: 1px solid #363636; display: grid; place-items: center; flex: none; }
input[type=checkbox]:checked::after { content: ""; width: 4px; height: 9px; border: solid #eee; border-width: 0 2px 2px 0; transform: rotate(40deg); margin-top: -3px; }
input[type=radio] { appearance: none; width: 11px; height: 11px; padding: 0; border: 1px solid #333; border-radius: 50%; }
.up, .dn, .lf, .rt, .down { width: 0; height: 0; border: 4px solid transparent; display: block; }
.up { border-bottom-color: #fff; border-top: 0; }
.dn, .down { border-top-color: #fff; border-bottom: 0; }
.lf { border-right-color: #fff; border-left: 0; }
.rt { border-left-color: #fff; border-right: 0; }
.vgrip { width: 3px; height: 190px; background: radial-gradient(circle, #6c6c6c 1px, transparent 1px) 0 0/3px 5px; flex: none; }
.vgrip.left { margin: 190px 2px 0; }
.vgrip.right { margin: 188px 3px 0; }

.view { flex: 1; min-width: 0; display: flex; flex-direction: column; border-top: 1px solid #303030; }
.viewmenu { display: grid; grid-template-columns: 35px 50px 50px 38px 57px 40px; height: 22px; justify-items: start; padding: 5px 0 0 7px; }
.viewtools { display: flex; align-items: center; height: 18px; margin: 0 0 2px -3px; flex: none; }
.viewtools button { width: 19px; height: 18px; display: grid; place-items: center; }
.viewtools button svg { width: 16px; height: 16px; }
.viewtools .s { width: 11px; height: 14px; }
.viewtools .dark svg { background: #222; }
.stage { flex: 1; position: relative; overflow: hidden; background: #a1a1a1; border-right: 1px solid #888; }
.scene { position: absolute; left: 0; top: 0; }
.viewcube { position: absolute; right: 22px; top: 28px; width: 49px; height: 49px; display: grid; place-items: center; background: linear-gradient(#bec1c4, #a4a6aa); border: 1px dashed #999; box-shadow: 0 5px 6px -2px #555; color: #787b7f; font: bold 11px Roboto, sans-serif; }
.axis { position: absolute; left: 21px; bottom: 3px; color: #0f0; font: bold 12px/14px "Liberation Sans", sans-serif; }

.attrs { flex: 0 0 311px; display: flex; overflow: hidden; border-top: 1px solid #303030; }
.attrbody { flex: 0 0 390px; margin-left: 1px; display: flex; flex-direction: column; }
.attrmenu { display: grid; grid-template-columns: 30px 53px 41px 60px 38px 30px; height: 20px; justify-items: start; padding: 2px 0 0 5px; margin-top: 2px; flex: none; }
.attrtabs { display: flex; align-items: flex-end; border-bottom: 1px solid #2c2c2c; padding-left: 1px; position: relative; margin-top: 8px; height: 24px; flex: none; }
.attrtabs::after { content: ""; position: absolute; left: 0; right: 0; top: 24px; height: 5px; border: 1px solid #333; border-top: 0; background: #525252; }
.attrtabs button { width: 86px; height: 16px; border: 1px solid #303030; border-bottom: 0; }
.attrtabs .active { width: 61px; height: 19px; background: #606060; border-color: #555; border-radius: 2px 2px 0 0; }
.name { display: flex; align-items: center; gap: 6px; padding: 31px 0 27px; }
.name label { width: 137px; text-align: right; }
.name input { width: 147px; height: 19px; }
.frame { border: 1px solid #333; border-top-color: #5a5a5a; padding: 6px 0 2px 3px; }
.inner { border: 1px solid #2e2e2e; border-left-width: 2px; height: 259px; overflow: hidden; }
.rows { border-left: 1px solid #555; padding: 2px 0 1px; }
.first { margin-top: -11px; padding-top: 0; }
.row { display: grid; grid-template-columns: 140px 66px 66px 66px; column-gap: 3px; align-items: center; height: 21px; }
.row > label:first-child { text-align: right; padding-right: 5px; white-space: nowrap; }
.row input { height: 19px; width: 66px; font-size: 10px; }
.row .check { display: flex; align-items: center; gap: 4px; white-space: nowrap; }
.row .check input { width: 13px; height: 13px; }
.row.off { color: #777; height: 19px; }
.row.off input { color: #666; background: #444; border-color: #505050; }
.rows hr { border: 0; border-top: 1px solid #555; margin: 4px 0 4px; }
.row input[type=range] { appearance: none; width: 180px; background: none; border: 0; padding: 0; height: 18px; }
.row input[type=range]::-webkit-slider-runnable-track { height: 3px; background: #383838; border: 1px solid #2c2c2c; border-bottom-color: #555; }
.row input[type=range]::-webkit-slider-thumb { appearance: none; width: 10px; height: 13px; margin-top: -6px; background: linear-gradient(#9a9a9a, #666); border: 1px solid #222; clip-path: polygon(0 0, 100% 0, 100% 70%, 50% 100%, 0 70%); }
h3 { display: flex; align-items: center; height: 19px; font-weight: bold; font-size: 11px; background: #4e4e4e; border-top: 1px solid #5c5c5c; border-bottom: 1px solid #303030; padding-left: 6px; gap: 14px; }
h3 .down { border-width: 4px; border-left-width: 5px; border-right-width: 5px; border-bottom: 0; margin-top: -4px; border-top-color: #ddd; }
.hgrip { width: 136px; height: 3px; margin: 3px 0 0 139px; background: radial-gradient(circle, #777 1px, transparent 1px) 0 0/5px 3px; flex: none; }
.noteslabel { font-weight: bold; display: flex; gap: 6px; padding: 1px 0 0 8px; height: 14px; font-size: 10px; }
textarea { flex: 1; resize: none; border-radius: 0; border-color: #222; }

.popup { position: absolute; left: 346px; top: 10px; width: 137px; background: #444; border: 1px solid #303030; border-top: 0; display: flex; flex-direction: column; padding-bottom: 1px; }
.tear { height: 11px; background: #555; border-bottom: 1px solid #4a4a4a; padding-top: 4px; }
.tear::before { content: ""; display: block; border-top: 1px dashed #222; margin: 0 2px; }
.popup button { height: 18px; padding: 0 10px 0 22px; display: flex; align-items: center; justify-content: space-between; }
.popup i { border: 3px solid transparent; border-left-color: #ccc; border-right: 0; }
.popup .hot { margin-top: 2px; background: #5f86ad; color: #fff; }

.window { position: absolute; left: 0; top: 216px; width: 289px; bottom: 0; background: #ebebeb; border: 1px solid #2b2b2b; border-bottom: 0; padding: 0 8px 6px; display: flex; flex-direction: column; }
.titlebar { display: flex; height: 29px; flex: none; align-items: flex-start; }
.appicon { width: 12px; height: 16px; margin: 6px 0 0 3px; }
.titlebar h1 { flex: 1; text-align: center; font: 14px/27px "Open Sans", "Noto Sans", sans-serif; color: #333; padding-left: 78px; }
.titlebar button { width: 26px; height: 20px; display: grid; place-items: center; }
.titlebar svg { width: 12px; height: 12px; }
.titlebar .appicon { height: 16px; }
.titlebar .close { width: 42px; background: #bdbdbd; margin-right: -2px; }
.client { flex: 1; min-height: 0; background: #444; border: 2px solid #777; border-top-color: #555; display: flex; flex-direction: column; margin-right: -1px; }
.client nav { display: grid; grid-template-columns: 47px 39px 30px; justify-items: start; padding-left: 6px; height: 18px; }
.filter { display: flex; gap: 5px; align-items: center; padding-left: 2px; height: 19px; }
.filter svg { width: 16px; height: 16px; }
.filter input { flex: 1; height: 18px; }
.listarea { flex: 1; margin-top: 5px; background: #2a2a2a; display: grid; grid-template: minmax(0, 1fr) 15px / minmax(0, 1fr) 14px; gap: 1px; }
.listarea ul { margin: 0; padding: 0; list-style: none; }
li { display: flex; align-items: center; height: 19px; padding-left: 41px; gap: 12px; }
li svg { width: 16px; height: 16px; }
.dim { color: #666; }
.sel { background: #668cb3; color: #fff; }
.vbar { display: flex; flex-direction: column; }
.hbar { display: flex; }
.thumb { flex: 1; border: 1px solid #1e1e1e; }
.vbar button, .hbar button { width: 14px; height: 15px; border: 1px solid #1c1c1c; border-radius: 2px; display: grid; place-items: center; }
.client .hgrip { width: 86px; margin: 2px 0 1px 89px; }

.ink { position: absolute; left: 0; top: 0; pointer-events: none; }
.ink path { fill: none; stroke: #fff; stroke-width: 3; stroke-linecap: round; stroke-linejoin: round; }
```
FILE: scene.js
```js
const NS = "http://www.w3.org/2000/svg";
const cloth = document.getElementById("cloth");
const ground = document.getElementById("ground");

function add(parent, tag, attrs) {
  const el = document.createElementNS(NS, tag);
  for (const k in attrs) el.setAttribute(k, attrs[k]);
  parent.appendChild(el);
}
function line(parent, pts, stroke, width = 1, opacity = 1) {
  add(parent, "polyline", {
    points: pts.map(p => p[0].toFixed(1) + "," + p[1].toFixed(1)).join(" "),
    fill: "none", stroke, "stroke-width": width, opacity
  });
}

// Cloth: 39 columns by 22 rows; cells get smaller away from the top-left corner.
const COLS = 39, ROWS = 22;
const ease = (i, n, shrink) => i * (1 - shrink * i) / (n * (1 - shrink * n));
function point(c, r) {
  const u = ease(c, COLS, 0.0014), v = ease(r, ROWS, 0.0026);
  const left = 205 + 6 * v, right = 602 - 16 * v;
  const wave = 0.8 * Math.sin(v * 7 + c * 0.4) * u;
  const top = 88 + 4 * u, bottom = 330.5 - 8 * u;
  return [left + (right - left) * u + wave, top + (bottom - top) * v];
}
const range = n => Array.from({ length: n + 1 }, (_, i) => i);
const rim = [
  ...range(COLS).map(c => point(c, 0)), ...range(ROWS).map(r => point(COLS, r)),
  ...range(COLS).map(c => point(COLS - c, ROWS)), ...range(ROWS).map(r => point(0, ROWS - r))
];
add(cloth, "polygon", { points: rim.map(p => p.join(",")).join(" "), fill: "#696969" });
for (let c = 0; c <= COLS; c++)
  line(cloth, range(ROWS).map(r => point(c, r)), "#000058", 1, c % 2 && c > 1 ? 0.6 : 0.9);
for (let r = 0; r <= ROWS; r++)
  line(cloth, range(COLS).map(c => point(c, r)), "#000058", 1, r % 2 && r > 1 ? 0.9 : 0.65);
for (const base of [0, 17])
  for (let r = base; r < base + 6; r++)
    for (let c = 0; c < 6; c++) {
      if ((r === 3 || r === 4) && c > 2 && c < 5) continue;
      const [x, y] = point(c, r);
      add(cloth, "rect", { x: x - 1.5, y: y - 1.5, width: 3, height: 3, fill: "#00005c" });
    }
for (const [x, y] of [[232, 116], [235, 303]])
  add(cloth, "path", { d: `M${x - 2.5} ${y}h5M${x} ${y - 2.5}v5`, stroke: "#00005c" });
add(cloth, "path", { d: "M402 211q0 4 4 5q4-1 4-5M406 209v7M403 213h6M407 212l4-3", fill: "none", stroke: "#111", "stroke-width": 0.9 });

// Ground grid in perspective: [y at the left edge, y at the right rim].
const rows = [[438, 418], [446, 425], [455, 432], [465, 441], [475, 450], [485, 460], [496, 471], [507, 482], [518, 494]];
for (const [y, rim] of rows)
  line(ground, [[0, y], [541 + rim - 418, rim]], "#7c7c7c", 1, 0.9);
for (let k = -16; k <= 20; k++) {
  const step = k <= 0 ? 16.2 * k : k <= 10 ? 15.5 * k : 155 + 14.8 * (k - 10);
  const top = [238 + step, 438 - (238 + step) * 0.037];
  const major = k % 10 === 0 && k < 20;
  line(ground, [top, [234 + k * 19.2, 480]], k === 0 ? "#000" : major ? "#222" : "#7c7c7c", k === 0 ? 2 : 1);
}
```
